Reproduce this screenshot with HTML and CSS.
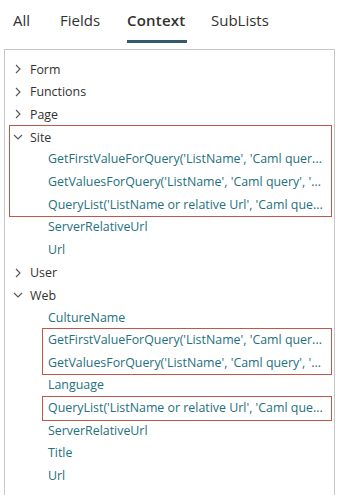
FILE: index.html
```html
<!DOCTYPE html>
<html>
<head>
<meta charset="utf-8">
<link rel="stylesheet" href="styles.css">
</head>
<body>
<div class="tabs">
  <div class="tab t-all"><span>All</span></div>
  <div class="tab t-fields"><span>Fields</span></div>
  <div class="tab t-context active"><span>Context</span></div>
  <div class="tab t-sub"><span>SubLists</span></div>
</div>
<div class="panel">
  <div class="tree">
    <div class="node"><div class="row"><svg class="chev" viewBox="0 0 10 10"><polyline points="3,1 7,5 3,9"/></svg><span>Form</span></div></div>
    <div class="node"><div class="row"><svg class="chev" viewBox="0 0 10 10"><polyline points="3,1 7,5 3,9"/></svg><span>Functions</span></div></div>
    <div class="node"><div class="row"><svg class="chev" viewBox="0 0 10 10"><polyline points="3,1 7,5 3,9"/></svg><span>Page</span></div></div>
    <div class="node">
      <div class="boxed">
        <div class="row"><svg class="chev" viewBox="0 0 10 10"><polyline points="1,3 5,7 9,3"/></svg><span>Site</span></div>
        <div class="children">
          <div class="item">GetFirstValueForQuery('ListName', 'Caml quer...</div>
          <div class="item">GetValuesForQuery('ListName', 'Caml query', '...</div>
          <div class="item">QueryList('ListName or relative Url', 'Caml que...</div>
        </div>
      </div>
      <div class="children">
        <div class="item">ServerRelativeUrl</div>
        <div class="item">Url</div>
      </div>
    </div>
    <div class="node"><div class="row"><svg class="chev" viewBox="0 0 10 10"><polyline points="3,1 7,5 3,9"/></svg><span>User</span></div></div>
    <div class="node">
      <div class="row"><svg class="chev" viewBox="0 0 10 10"><polyline points="1,3 5,7 9,3"/></svg><span>Web</span></div>
      <div class="children">
        <div class="item">CultureName</div>
        <div class="boxed">
          <div class="item">GetFirstValueForQuery('ListName', 'Caml quer...</div>
          <div class="item">GetValuesForQuery('ListName', 'Caml query', '...</div>
        </div>
        <div class="item">Language</div>
        <div class="boxed">
          <div class="item">QueryList('ListName or relative Url', 'Caml que...</div>
        </div>
        <div class="item">ServerRelativeUrl</div>
        <div class="item">Title</div>
        <div class="item">Url</div>
      </div>
    </div>
  </div>
</div>
</body>
</html>
```
FILE: styles.css
```css
html, body {
  margin: 0;
  padding: 0;
  background: #ffffff;
}
body {
  font-family: "Open Sans", "Noto Sans", sans-serif;
  color: #323130;
  width: 344px;
  height: 495px;
  overflow: hidden;
}
.tabs {
  display: flex;
  padding-left: 13px;
  height: 49px;
}
.tab {
  font-size: 15px;
  line-height: 20px;
  padding-top: 10px;
  color: #323130;
  box-sizing: border-box;
}
.t-all { width: 47px; }
.t-fields { width: 67px; }
.t-context { width: 84px; }
.tab span {
  display: inline-block;
  height: 33px;
  box-sizing: border-box;
}
.tab.active span {
  font-weight: 600;
  letter-spacing: 0.2px;
  border-bottom: 3px solid #34596a;
  padding-right: 2px;
}
.panel {
  margin-left: 4px;
  width: 331px;
  height: 460px;
  border: 1px solid #c6c6c6;
  border-bottom: none;
  box-sizing: border-box;
}
.tree {
  padding: 8px 3px 0 5px;
  font-size: 12.4px;
}
.row {
  display: flex;
  align-items: center;
  height: 22.6px;
  padding-left: 3px;
}
.row span {
  color: #323130;
}
.chev {
  width: 10px;
  height: 10px;
  margin-right: 7px;
  fill: none;
  stroke: #555555;
  stroke-width: 1.1;
}
.children {
  padding-left: 33px;
}
.item {
  height: 22.6px;
  line-height: 22.6px;
  padding-left: 5px;
  color: #24707c;
  white-space: nowrap;
}
.boxed {
  outline: 1px solid #c0584a;
}
```
